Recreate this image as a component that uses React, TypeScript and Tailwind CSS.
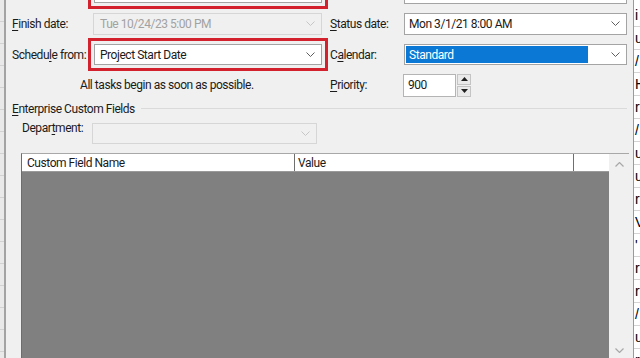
import React from 'react';

const Chevron: React.FC<{ disabled?: boolean }> = ({ disabled }) => (
    <svg width="9" height="5" viewBox="0 0 9 5" className="shrink-0">
        <path d="M0.5 0.5 L4.5 4.5 L8.5 0.5" fill="none" stroke={disabled ? '#c6c6c6' : '#5f5f5f'} strokeWidth="1" />
    </svg>
);

type ComboProps = {
    value?: string;
    disabled?: boolean;
    highlighted?: boolean;
    className?: string;
    pad?: string;
};

const Combo: React.FC<ComboProps> = ({ value, disabled, highlighted, className = '', pad = 'pl-[5px]' }) => (
    <div
        className={`flex items-center border ${
            disabled ? 'border-[#d6d6d6] bg-[#f0f0f0] text-[#a2a2a2]' : 'border-[#a4a4a4] bg-white text-[#1b1b1b]'
        } ${className}`}
    >
        {highlighted ? (
            <div className="flex-1 self-stretch m-[1px] bg-[#0a78d4] text-white flex items-center pl-[3px] mr-[18px]">{value}</div>
        ) : (
            <div className={`flex-1 ${pad}`}>{value}</div>
        )}
        <div className="w-[20px] flex justify-center pr-[2px]">
            <Chevron disabled={disabled} />
        </div>
    </div>
);

const RedBox: React.FC<{ children: React.ReactNode }> = ({ children }) => (
    <div className="w-[240px] border-[3px] border-[#d3222e] p-[3px]">{children}</div>
);

// mnemonic underline like a Win32 dialog
const U: React.FC<{ children: React.ReactNode }> = ({ children }) => (
    <span className="underline underline-offset-[2px] decoration-[1px]">{children}</span>
);

const excelLetters = ['i', 'u', '/', 'H', 'r', '/', 'u', 'u', 'r', 'V', "'", 'r', 'r', '/', 'u', 'r'];

const App: React.FC = () => {
    return (
        <div className="w-[640px] h-[358px] overflow-hidden flex whitespace-nowrap bg-white font-['Roboto','Noto_Sans',sans-serif] text-[12px] leading-[16px] tracking-[-0.45px] text-[#1b1b1b]">
            {/* Excel sheet peeking out on the left */}
            <div className="w-[4px] bg-[#e9e9e9] flex flex-col">
                {Array.from({ length: 17 }).map((_, i) => (
                    <div key={i} className="h-[22px] border-b border-[#d2d2d2] shrink-0" />
                ))}
            </div>

            {/* Project Information dialog */}
            <div className="w-[630px] bg-[#f0f0f0] border-l-2 border-r border-l-[#a3a3a3] border-r-[#9a9a9a] flex flex-col pl-[6px] pr-[6px] shrink-0">
                <div className="-mt-[23px] flex flex-col">
                    {/* Row 1 */}
                    <div className="h-[32px] flex items-center">
                        <div className="w-[318px] flex items-center">
                            <div className="w-[76px]"><U>S</U>tart date:</div>
                            <RedBox>
                                <Combo value="Mon 3/1/21 8:00 AM" className="h-[20px]" />
                            </RedBox>
                        </div>
                        <div className="flex items-center">
                            <div className="w-[74px]">C<U>u</U>rrent date:</div>
                            <Combo value="Tue 3/2/21 10:12 AM" className="w-[223px] h-[22px]" />
                        </div>
                    </div>

                    {/* Row 2 */}
                    <div className="h-[29px] flex items-center">
                        <div className="w-[318px] flex items-center">
                            <div className="w-[81px]"><U>F</U>inish date:</div>
                            <Combo value="Tue 10/24/23 5:00 PM" disabled className="w-[229px] h-[22px]" pad="pl-[6px]" />
                        </div>
                        <div className="flex items-center">
                            <div className="w-[74px]"><U>S</U>tatus date:</div>
                            <Combo value="Mon 3/1/21 8:00 AM" className="w-[223px] h-[22px]" pad="pl-[4px]" />
                        </div>
                    </div>

                    {/* Row 3 */}
                    <div className="h-[33px] flex items-center">
                        <div className="w-[318px] flex items-center">
                            <div className="w-[76px]">Schedu<U>l</U>e from:</div>
                            <RedBox>
                                <Combo value="Project Start Date" className="h-[21px]" pad="pl-[5px]" />
                            </RedBox>
                        </div>
                        <div className="flex items-center">
                            <div className="w-[74px]">C<U>a</U>lendar:</div>
                            <Combo value="Standard" highlighted className="w-[223px] h-[21px]" />
                        </div>
                    </div>

                    {/* Row 4 */}
                    <div className="h-[28px] flex items-center">
                        <div className="w-[318px] pl-[68px]">All tasks begin as soon as possible.</div>
                        <div className="flex items-center">
                            <div className="w-[73px]"><U>P</U>riority:</div>
                            <div className="w-[53px] h-[23px] bg-white border border-[#b4b4b4] flex items-center pl-[4px]">900</div>
                            <div className="ml-[1px] flex flex-col gap-[1px]">
                                <div className="w-[14px] h-[11px] bg-[#eaeaea] border border-[#c4c4c4] flex items-center justify-center">
                                    <svg width="7" height="4" viewBox="0 0 7 4"><path d="M0 4 L3.5 0 L7 4 Z" fill="#202020" /></svg>
                                </div>
                                <div className="w-[14px] h-[11px] bg-[#eaeaea] border border-[#c4c4c4] flex items-center justify-center">
                                    <svg width="7" height="4" viewBox="0 0 7 4"><path d="M0 0 L3.5 4 L7 0 Z" fill="#202020" /></svg>
                                </div>
                            </div>
                        </div>
                    </div>

                    {/* Enterprise Custom Fields group */}
                    <div className="h-[19px] flex items-center">
                        <div><U>E</U>nterprise Custom Fields</div>
                        <div className="flex-1 border-t border-[#dadada] ml-[6px]" />
                    </div>

                    <div className="h-[30px] flex items-center pl-[10px]">
                        <div className="w-[70px] self-start pt-[2px]">Depar<U>t</U>ment:</div>
                        <Combo disabled className="w-[225px] h-[21px]" />
                    </div>
                </div>

                {/* Custom fields grid */}
                <div className="mt-[5px] ml-[9px] w-[608px] flex-1 min-h-0 flex border-l border-t border-l-[#6d6d6d] border-t-[#a8a8a8]">
                    <div className="w-[587px] flex flex-col">
                        <div className="h-[18px] bg-white flex border-b border-[#9a9a9a] shrink-0">
                            <div className="w-[273px] pl-[5px] border-r border-[#6f6f6f] flex items-center">Custom Field Name</div>
                            <div className="w-[279px] pl-[3px] border-r border-[#6f6f6f] flex items-center">Value</div>
                        </div>
                        <div className="flex-1 bg-[#808080]" />
                    </div>
                    <div className="w-[20px] bg-[#f0f0f0] flex flex-col items-center justify-between pt-[8px] pb-[5px]">
                        <svg width="9" height="5" viewBox="0 0 9 5"><path d="M0.5 4.5 L4.5 0.5 L8.5 4.5" fill="none" stroke="#a8a8a8" strokeWidth="1.2" /></svg>
                        <svg width="9" height="5" viewBox="0 0 9 5"><path d="M0.5 0.5 L4.5 4.5 L8.5 0.5" fill="none" stroke="#a8a8a8" strokeWidth="1.2" /></svg>
                    </div>
                </div>
            </div>

            {/* Excel cells peeking out on the right */}
            <div className="flex-1 overflow-hidden bg-white flex flex-col pt-[4px]">
                {excelLetters.map((ch, i) => (
                    <div key={i} className="h-[23px] shrink-0 border-b border-[#d4d4d4] pl-[1px] flex items-center text-[14px] tracking-normal text-black font-['Liberation_Sans',sans-serif]">
                        {ch}
                    </div>
                ))}
            </div>
        </div>
    );
};

export default App;
